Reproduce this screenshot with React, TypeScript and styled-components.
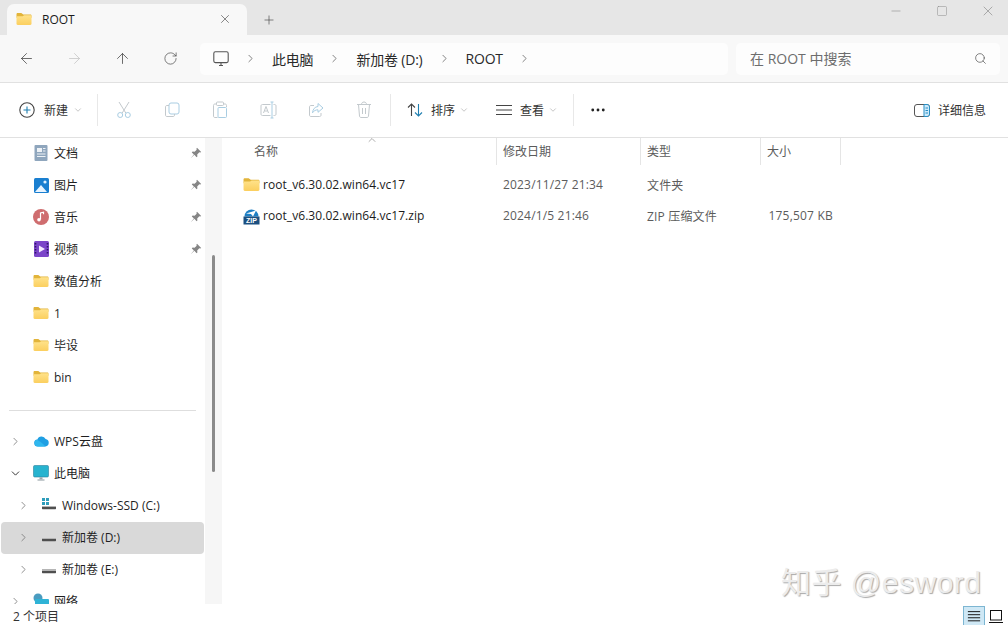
import React, { useId } from "react";
import styled, { createGlobalStyle } from "styled-components";
import {
  ArrowLeft,
  ArrowRight,
  ArrowUp,
  ChevronDown,
  ChevronRight,
  ChevronUp,
  Ellipsis,
  Minus,
  Plus,
  RotateCw,
  Search,
  Square,
  X,
} from "lucide-react";

const GlobalStyle = createGlobalStyle`
  html, body {
    margin: 0;
    padding: 0;
    background: #ffffff;
  }
  body {
    font-family: "Open Sans", "Noto Sans CJK SC", sans-serif;
    font-size: 12px;
    color: #1b1b1b;
    -webkit-font-smoothing: antialiased;
  }
`;

const Window = styled.div`
  position: relative;
  width: 1008px;
  height: 625px;
  display: flex;
  flex-direction: column;
  overflow: hidden;
`;

/* title bar */
const TitleBar = styled.div`
  height: 35px;
  flex: none;
  background: #e6e6e6;
  display: flex;
  align-items: flex-end;
  padding-left: 7px;
`;

const Tab = styled.div`
  width: 240px;
  height: 31px;
  box-sizing: border-box;
  background: #f8f8f8;
  border-radius: 7px 7px 0 0;
  display: flex;
  align-items: center;
  padding: 0 15px 1px 9px;
  gap: 10px;
`;

const TabTitle = styled.span`
  flex: 1;
  font-size: 12px;
`;

const NewTab = styled.div`
  margin-left: 15px;
  height: 31px;
  display: flex;
  align-items: center;
  color: #444;
`;

const WindowControls = styled.div`
  margin-left: auto;
  margin-right: -3px;
  align-self: flex-start;
  display: flex;
  color: #8a8a8a;
`;

const WindowControl = styled.div`
  width: 46px;
  height: 21px;
  display: flex;
  align-items: center;
  justify-content: center;
`;

/* nav bar */
const NavBar = styled.div`
  height: 48px;
  flex: none;
  box-sizing: border-box;
  background: #f8f8f8;
  border-bottom: 1px solid #e1e1e1;
  display: flex;
  align-items: center;
  padding: 0 8px 0 2px;
`;

const NavButton = styled.div<{ $disabled?: boolean }>`
  width: 48px;
  height: 32px;
  display: flex;
  align-items: center;
  justify-content: center;
  color: ${(p) => (p.$disabled ? "#c4c4c4" : "#444")};
`;

const AddressBox = styled.div`
  width: 528px;
  height: 32px;
  margin-left: 6px;
  background: #fdfdfd;
  border-radius: 5px;
  display: flex;
  align-items: center;
  padding-left: 13px;
  box-sizing: border-box;
  font-size: 14px;
  color: #2a2a2a;
`;

const Crumb = styled.span`
  white-space: nowrap;
  letter-spacing: -0.2px;
`;

const CrumbArrow = styled.span`
  width: 21px;
  margin: 0 11px 0 11px;
  display: flex;
  justify-content: center;
  color: #444;
`;

const SearchBox = styled.div`
  width: 264px;
  height: 32px;
  margin-left: 8px;
  box-sizing: border-box;
  background: #fdfdfd;
  border-radius: 5px;
  display: flex;
  align-items: center;
  justify-content: space-between;
  padding: 0 13px 1px 14px;
  font-size: 14px;
  color: #6d6d6d;
`;

/* command bar */
const CommandBar = styled.div`
  height: 55px;
  flex: none;
  box-sizing: border-box;
  background: #fff;
  border-bottom: 1px solid #e1e1e1;
  display: flex;
  align-items: center;
  padding-left: 19px;
`;

const CommandButton = styled.div<{ $gap?: number; $left?: number }>`
  display: flex;
  align-items: center;
  gap: ${(p) => p.$gap ?? 8}px;
  margin-left: ${(p) => p.$left ?? 0}px;
  color: #333;
  white-space: nowrap;
`;

const IconCommand = styled.div`
  width: 48px;
  display: flex;
  justify-content: center;
`;

const CommandDivider = styled.div<{ $left: number; $right: number }>`
  width: 1px;
  height: 32px;
  background: #e8e8e8;
  margin: 0 ${(p) => p.$right}px 0 ${(p) => p.$left}px;
`;

const Caret = styled.span`
  display: flex;
  color: #8d8d8d;
  margin-left: -4px;
`;

const DetailsButton = styled(CommandButton)`
  margin-left: auto;
  margin-right: 22px;
`;

/* main area */
const Main = styled.div`
  flex: 1;
  min-height: 0;
  display: flex;
  overflow: hidden;
`;

const Sidebar = styled.div`
  width: 205px;
  flex: none;
  overflow: hidden;
`;

const NavRow = styled.div<{ $level?: number; $selected?: boolean }>`
  height: 32px;
  box-sizing: border-box;
  margin-left: 1px;
  margin-right: 1px;
  border-radius: 4px;
  background: ${(p) => (p.$selected ? "#d9d9d9" : "transparent")};
  display: flex;
  align-items: center;
  padding: 0 3px 2px ${(p) => (p.$level ? 15 : 7)}px;
  color: #1f1f1f;
`;

const Expander = styled.span`
  width: 14px;
  display: flex;
  justify-content: center;
  color: #777;
  margin-right: 11px;
`;

const NavIconSlot = styled.span`
  width: 16px;
  height: 16px;
  display: flex;
  align-items: center;
  justify-content: center;
  margin-right: 5px;
`;

const NavLabel = styled.span`
  flex: 1;
  white-space: nowrap;
`;

const Pin = styled.span`
  display: flex;
  margin-right: -1px;
`;

const NavDivider = styled.div`
  height: 1px;
  background: #dedede;
  margin: 16px 9px 15px;
  width: 187px;
`;

const ScrollTrack = styled.div`
  width: 17px;
  flex: none;
  background: #f6f6f6;
  padding-top: 117px;
  display: flex;
  justify-content: center;
  box-sizing: border-box;
`;

const ScrollThumb = styled.div`
  width: 3px;
  height: 217px;
  border-radius: 2px;
  background: #8a8a8a;
`;

const Content = styled.div`
  flex: 1;
  min-width: 0;
`;

const Columns = "275px 144px 120px 80px";

const HeaderRow = styled.div`
  display: grid;
  grid-template-columns: ${Columns};
  height: 27px;
  position: relative;
`;

const HeaderCell = styled.div<{ $pad: number }>`
  display: flex;
  align-items: center;
  padding: 0 0 1px ${(p) => p.$pad}px;
  border-right: 1px solid #e5e5e5;
  color: #5b5b5b;
`;

const SortArrow = styled.span`
  position: absolute;
  left: 144px;
  top: -4px;
  color: #777;
  display: flex;
`;

const FileList = styled.div`
  padding-top: 4px;
`;

const FileRow = styled.div`
  display: grid;
  grid-template-columns: ${Columns};
  height: 31px;
  align-items: center;
  color: #5c5c5c;
`;

const NameCell = styled.div`
  display: flex;
  align-items: center;
  gap: 3px;
  padding-left: 21px;
  color: #1b1b1b;
  letter-spacing: 0.06px;
  white-space: nowrap;
`;

const DataCell = styled.div`
  padding-left: 6px;
  letter-spacing: 0.17px;
  white-space: nowrap;
`;

const SizeCell = styled.div`
  padding-right: 8px;
  text-align: right;
  letter-spacing: 0.2px;
  white-space: nowrap;
`;

/* status bar */
const StatusBar = styled.div`
  height: 21px;
  flex: none;
  display: flex;
  align-items: center;
  justify-content: space-between;
  padding: 2px 4px 0 13px;
  box-sizing: border-box;
  color: #333;
`;

const ViewToggles = styled.div`
  display: flex;
  gap: 3px;
  align-self: flex-end;
`;

const ViewToggle = styled.div<{ $active?: boolean }>`
  width: ${(p) => (p.$active ? 22 : 16)}px;
  height: 19px;
  box-sizing: border-box;
  display: flex;
  align-items: center;
  justify-content: center;
  color: #111;
  background: ${(p) => (p.$active ? "#cfe8f5" : "transparent")};
  border: 1px solid ${(p) => (p.$active ? "#7db6d2" : "transparent")};
  border-bottom: none;
`;

const Watermark = styled.div`
  position: absolute;
  left: 781px;
  top: 563px;
  font-family: "Liberation Sans", "Noto Sans CJK SC", sans-serif;
  font-size: 30px;
  line-height: 40px;
  letter-spacing: 0.5px;
  white-space: nowrap;
  color: #ececec;
  text-shadow: 1px 1px 1px #a9a9a9;
`;

const Folder = ({ size = 16 }: { size?: number }) => {
  const id = useId();
  return (
    <svg width={size} height={size} viewBox="0 0 16 16">
      <defs>
        <linearGradient id={id} x1="0" y1="0" x2="0" y2="1">
          <stop offset="0" stopColor="#ffe28a" />
          <stop offset="1" stopColor="#fbcf5f" />
        </linearGradient>
      </defs>
      <path d="M0.5 3.2c0-.7.5-1.2 1.2-1.2h3.6l2 1.6h7c.7 0 1.2.5 1.2 1.2v2H.5z" fill="#e2b43a" />
      <path d="M.5 5.2h6.2l1.5-1h6.1c.7 0 1.2.5 1.2 1.2v7.4c0 .7-.5 1.2-1.2 1.2H1.7c-.7 0-1.2-.5-1.2-1.2z" fill={`url(#${id})`} />
    </svg>
  );
};

const DocIcon = () => (
  <svg width="14" height="16" viewBox="0 0 14 16">
    <rect x="0.5" y="0" width="13" height="16" rx="1" fill="#8fa6bd" />
    <rect x="3" y="3" width="5" height="4" fill="#eef2f6" />
    <path d="M9 3.5h2.5M9 6h2.5M3 9h8.5M3 11.5h8.5" stroke="#eef2f6" strokeWidth="1" />
  </svg>
);

const PictureIcon = () => (
  <svg width="15" height="15" viewBox="0 0 15 15">
    <rect width="15" height="15" rx="1.5" fill="#1a7fd0" />
    <circle cx="11" cy="4" r="1.6" fill="#dff1ff" />
    <path d="M1 14l6-7 6 7z" fill="#e8f4ff" />
  </svg>
);

const MusicIcon = () => (
  <svg width="16" height="16" viewBox="0 0 16 16">
    <circle cx="8" cy="8" r="8" fill="#cf6d6f" />
    <path d="M7.5 10.5V4l3 -.8v2" stroke="#fff" strokeWidth="1.2" fill="none" />
    <circle cx="6" cy="10.8" r="1.8" fill="#fff" />
  </svg>
);

const VideoIcon = () => (
  <svg width="15" height="16" viewBox="0 0 15 16">
    <rect width="15" height="16" rx="1.5" fill="#7b45c9" />
    <path d="M5 4.5l6 3.5-6 3.5z" fill="#f3e9ff" />
    <path d="M1.5 2v12M13.5 2v12" stroke="#2f1566" strokeWidth="1.6" strokeDasharray="1.5 1.5" />
  </svg>
);

const CloudIcon = () => (
  <svg width="15" height="12" viewBox="0 0 15 12">
    <path d="M4 11.5a3.5 3.5 0 0 1-.6-7A4.4 4.4 0 0 1 11.6 4 3.8 3.8 0 0 1 11.5 11.5z" fill="#1f9fe3" />
    <path d="M4 11.5a3.5 3.5 0 0 1-1-6.8c2 1 5 3 8.5 6.8z" fill="#2fb7ee" />
  </svg>
);

const PcIcon = () => (
  <svg width="16" height="16" viewBox="0 0 16 16">
    <rect x="0.5" y="0.5" width="15" height="11.5" rx="1.2" fill="#27b3cf" stroke="#2a7f9c" strokeWidth="0.6" />
    <path d="M6.5 12.3h3v2h-3z" fill="#9aa7ad" />
    <path d="M4.5 15h7" stroke="#8a979e" strokeWidth="1" />
  </svg>
);

const DriveIcon = ({ windows, light }: { windows?: boolean; light?: boolean }) => (
  <svg width="16" height="16" viewBox="0 0 16 16" style={{ overflow: "visible" }}>
    {windows && <path d="M1 1h3v3H1zM5 1h3v3H5zM1 5h3v3H1zM5 5h3v3H5z" fill="#2e9dbb" />}
    <rect x="1" y="9" width="14" height="3.2" rx="0.6" fill="#4f4f4f" />
    <rect x="1" y={light ? 8 : 9} width="14" height={light ? 2 : 1} fill="#b5b5b5" />
  </svg>
);

const NetworkIcon = () => (
  <svg width="16" height="16" viewBox="0 0 16 16">
    <circle cx="5" cy="5" r="4.5" fill="#4a9cc0" />
    <rect x="2" y="6" width="14" height="8" rx="1" fill="#2fb3d6" />
    <path d="M4 14.5h10" stroke="#6c7c84" strokeWidth="1" />
  </svg>
);

const PinIcon = () => (
  <svg width="12" height="12" viewBox="0 0 12 12">
    <path d="M7 .8l4.2 4.2-1 .6-.9-.3L7.2 7.4l.2 2-.8.8-2.2-2.4L1 11 .9 11l3-3.4L1.8 5.4l.8-.8 2 .2 2.1-2.1-.3-.9z" fill="#858585" />
  </svg>
);

const ZipIcon = () => (
  <svg width="17" height="18" viewBox="0 0 17 18">
    <path d="M1.5 9.5a7 7 0 0 1 14 0z" fill="#1e7fc4" />
    <path d="M3 6.5l10-3-3 6-2-2.5z" fill="#fff" />
    <rect x="0.5" y="9.5" width="16" height="8" fill="#1b4f80" />
    <text x="8.5" y="16" fontSize="7" fontWeight="700" textAnchor="middle" fill="#fff" fontFamily="Liberation Sans, sans-serif">
      ZIP
    </text>
  </svg>
);

const MonitorIcon = () => (
  <svg width="16" height="16" viewBox="0 0 16 16" fill="none" stroke="#555" strokeWidth="1.1">
    <rect x="0.8" y="0.8" width="14.4" height="10.8" rx="1.6" />
    <path d="M6 14.5h4M8 12v2.5" />
  </svg>
);

const GREY = "#c3c9cd";
const TINT = "#a9cde2";

const CutIcon = () => (
  <svg width="16" height="18" viewBox="0 0 16 18" fill="none">
    <path d="M3 1l6.8 11M13 1L6.2 12" stroke={GREY} />
    <circle cx="4.2" cy="14" r="2.5" stroke={TINT} />
    <circle cx="11.8" cy="14" r="2.5" stroke={TINT} />
  </svg>
);

const CopyIcon = () => (
  <svg width="16" height="16" viewBox="0 0 16 16" fill="none">
    <rect x="5" y="1" width="10" height="11" rx="2" stroke={TINT} />
    <path d="M5 3.5H3C2 3.5 1.5 4 1.5 5v8c0 1 .5 1.5 1.5 1.5h6c1 0 1.5-.5 1.5-1.5v-1" stroke={GREY} />
  </svg>
);

const PasteIcon = () => (
  <svg width="16" height="18" viewBox="0 0 16 18" fill="none">
    <path d="M4.5 3H3C2 3 1.5 3.5 1.5 4.5V15c0 1 .5 1.5 1.5 1.5h2.5M11.5 3H13c1 0 1.5.5 1.5 1.5V6" stroke={GREY} />
    <rect x="4.5" y="1" width="7" height="3.5" rx="1" stroke={GREY} />
    <rect x="6" y="6.5" width="8.5" height="10" rx="1" stroke={TINT} />
  </svg>
);

const RenameIcon = () => (
  <svg width="17" height="18" viewBox="0 0 17 18" fill="none">
    <path d="M10.5 3.5H2.5c-1 0-1.5.5-1.5 1.5v8c0 1 .5 1.500 1.500 1.500h8M13.500 3.500h1c1 0 1.500.5 1.500 1.500v8c0 1-.5 1.500-1.500 1.500h-1" stroke={GREY} />
    <path d="M3.500 12l2.500-6.500L8.500 12M4.500 10h3" stroke={GREY} />
    <path d="M12 1v16M10.500 1h3M10.500 17h3" stroke={TINT} />
  </svg>
);

const ShareIcon = () => (
  <svg width="16" height="16" viewBox="0 0 16 16" fill="none">
    <path d="M6 3.500H3C2 3.500 1.500 4 1.500 5v8c0 1 .5 1.500 1.500 1.500h8.500c1 0 1.500-.5 1.500-1.500v-2" stroke={GREY} />
    <path d="M10 1.500l5 4.500-5 4.300V7.800c-2.500 0-4.200 1-5.500 3 .3-3.500 2.300-6 5.500-6.300z" stroke={TINT} />
  </svg>
);

const TrashIcon = () => (
  <svg width="16" height="18" viewBox="0 0 16 18" fill="none" stroke={GREY}>
    <path d="M1 3.500h14M5.500 3.500c0-1.500 1-2.500 2.500-2.500s2.500 1 2.500 2.500" />
    <path d="M2.500 3.500l1 11.500c.1 1 .7 1.500 1.500 1.500h6c.8 0 1.400-.5 1.500-1.500l1-11.500" />
    <path d="M6.500 7v6M9.500 7v6" />
  </svg>
);

const DetailsIcon = () => (
  <svg width="16" height="13" viewBox="0 0 16 13" fill="none">
    <rect x="0.5" y="0.5" width="15" height="12" rx="2.5" stroke="#555" />
    <path d="M10 .5h3c1.400 0 2.500 1.100 2.500 2.500v7c0 1.400-1.100 2.500-2.500 2.500h-3z" fill="#cdeafb" stroke="#2a8fc4" />
    <path d="M11.500 4h2.500M11.500 6.500h2.500M11.500 9h2.500" stroke="#2a8fc4" />
  </svg>
);

const NewIcon = () => (
  <svg width="16" height="16" viewBox="0 0 16 16" fill="none">
    <circle cx="8" cy="8" r="7.2" stroke="#444" strokeWidth="1.1" />
    <path d="M8 4.500v7M4.500 8h7" stroke="#1f7fb0" strokeWidth="1.1" />
  </svg>
);

const SortIcon = () => (
  <svg width="16" height="14" viewBox="0 0 16 14" fill="none" strokeWidth="1.1">
    <path d="M4.500 13V1M1 4.500L4.500 1 8 4.500" stroke="#444" />
    <path d="M11.500 1v12M8 9.500l3.500 3.500 3.500-3.500" stroke="#1f7fb0" />
  </svg>
);

const LinesIcon = ({ size = 16 }: { size?: number }) => (
  <svg width={size} height={size} viewBox="0 0 16 16" stroke="currentColor" strokeWidth="1.1">
    <path d="M1 3h14M1 6.500h14M1 10h14M1 13.500h14" />
  </svg>
);

const ViewIcon = () => (
  <svg width="16" height="12" viewBox="0 0 16 12" stroke="#444" strokeWidth="1.1">
    <path d="M0 1.500h16M0 6h16M0 10.500h16" />
  </svg>
);

const TileIcon = () => (
  <svg width="14" height="13" viewBox="0 0 14 13" fill="none" stroke="#111">
    <rect x="1.5" y="0.5" width="11" height="9.5" />
    <path d="M0 12.500h14" />
  </svg>
);

const ThinCaret = () => (
  <Caret>
    <ChevronDown size={10} strokeWidth={1.2} />
  </Caret>
);

const Arrow = () => (
  <CrumbArrow>
    <ChevronRight size={13} strokeWidth={1.2} />
  </CrumbArrow>
);

interface INavItem {
  label: string;
  icon: React.ReactNode;
  pinned?: boolean;
}

const quickItems: INavItem[] = [
  { label: "文档", icon: <DocIcon />, pinned: true },
  { label: "图片", icon: <PictureIcon />, pinned: true },
  { label: "音乐", icon: <MusicIcon />, pinned: true },
  { label: "视频", icon: <VideoIcon />, pinned: true },
  { label: "数值分析", icon: <Folder /> },
  { label: "1", icon: <Folder /> },
  { label: "毕设", icon: <Folder /> },
  { label: "bin", icon: <Folder /> },
];

const App = () => {
  return (
    <Window>
      <GlobalStyle />
      <TitleBar>
        <Tab>
          <Folder />
          <TabTitle>ROOT</TabTitle>
          <X size={14} strokeWidth={1} color="#333" />
        </Tab>
        <NewTab>
          <Plus size={14} strokeWidth={1.1} />
        </NewTab>
        <WindowControls>
          <WindowControl>
            <Minus size={14} strokeWidth={1} />
          </WindowControl>
          <WindowControl>
            <Square size={12} strokeWidth={1} />
          </WindowControl>
          <WindowControl>
            <X size={16} strokeWidth={1} />
          </WindowControl>
        </WindowControls>
      </TitleBar>

      <NavBar>
        <NavButton>
          <ArrowLeft size={17} strokeWidth={1.1} />
        </NavButton>
        <NavButton $disabled>
          <ArrowRight size={17} strokeWidth={1.1} />
        </NavButton>
        <NavButton>
          <ArrowUp size={17} strokeWidth={1.1} />
        </NavButton>
        <NavButton>
          <RotateCw size={15} strokeWidth={1.1} />
        </NavButton>
        <AddressBox>
          <MonitorIcon />
          <Arrow />
          <Crumb>此电脑</Crumb>
          <Arrow />
          <Crumb>新加卷 (D:)</Crumb>
          <Arrow />
          <Crumb>ROOT</Crumb>
          <Arrow />
        </AddressBox>
        <SearchBox>
          <span>在 ROOT 中搜索</span>
          <Search size={13} strokeWidth={1.2} color="#444" />
        </SearchBox>
      </NavBar>

      <CommandBar>
        <CommandButton $gap={9}>
          <NewIcon />
          <span>新建</span>
          <ThinCaret />
        </CommandButton>
        <CommandDivider $left={14} $right={2} />
        <IconCommand>
          <CutIcon />
        </IconCommand>
        <IconCommand>
          <CopyIcon />
        </IconCommand>
        <IconCommand>
          <PasteIcon />
        </IconCommand>
        <IconCommand>
          <RenameIcon />
        </IconCommand>
        <IconCommand>
          <ShareIcon />
        </IconCommand>
        <IconCommand>
          <TrashIcon />
        </IconCommand>
        <CommandDivider $left={2} $right={16} />
        <CommandButton>
          <SortIcon />
          <span>排序</span>
          <ThinCaret />
        </CommandButton>
        <CommandButton $left={27}>
          <ViewIcon />
          <span>查看</span>
          <ThinCaret />
        </CommandButton>
        <CommandDivider $left={15} $right={15} />
        <CommandButton>
          <Ellipsis size={18} strokeWidth={1.8} color="#222" />
        </CommandButton>
        <DetailsButton>
          <DetailsIcon />
          <span>详细信息</span>
        </DetailsButton>
      </CommandBar>

      <Main>
        <Sidebar>
          {quickItems.map((item, index) => (
            <NavRow key={index}>
              <Expander />
              <NavIconSlot>{item.icon}</NavIconSlot>
              <NavLabel>{item.label}</NavLabel>
              {item.pinned && (
                <Pin>
                  <PinIcon />
                </Pin>
              )}
            </NavRow>
          ))}
          <NavDivider />
          <NavRow>
            <Expander>
              <ChevronRight size={13} strokeWidth={1.5} />
            </Expander>
            <NavIconSlot>
              <CloudIcon />
            </NavIconSlot>
            <NavLabel>WPS云盘</NavLabel>
          </NavRow>
          <NavRow>
            <Expander>
              <ChevronDown size={13} strokeWidth={1.8} color="#333" />
            </Expander>
            <NavIconSlot>
              <PcIcon />
            </NavIconSlot>
            <NavLabel>此电脑</NavLabel>
          </NavRow>
          <NavRow $level={1}>
            <Expander>
              <ChevronRight size={13} strokeWidth={1.5} />
            </Expander>
            <NavIconSlot>
              <DriveIcon windows />
            </NavIconSlot>
            <NavLabel>Windows-SSD (C:)</NavLabel>
          </NavRow>
          <NavRow $level={1} $selected>
            <Expander>
              <ChevronRight size={13} strokeWidth={1.5} />
            </Expander>
            <NavIconSlot>
              <DriveIcon />
            </NavIconSlot>
            <NavLabel>新加卷 (D:)</NavLabel>
          </NavRow>
          <NavRow $level={1}>
            <Expander>
              <ChevronRight size={13} strokeWidth={1.5} />
            </Expander>
            <NavIconSlot>
              <DriveIcon light />
            </NavIconSlot>
            <NavLabel>新加卷 (E:)</NavLabel>
          </NavRow>
          <NavRow>
            <Expander>
              <ChevronRight size={13} strokeWidth={1.5} />
            </Expander>
            <NavIconSlot>
              <NetworkIcon />
            </NavIconSlot>
            <NavLabel>网络</NavLabel>
          </NavRow>
        </Sidebar>
        <ScrollTrack>
          <ScrollThumb />
        </ScrollTrack>
        <Content>
          <HeaderRow>
            <SortArrow>
              <ChevronUp size={12} strokeWidth={1.2} />
            </SortArrow>
            <HeaderCell $pad={32}>名称</HeaderCell>
            <HeaderCell $pad={6}>修改日期</HeaderCell>
            <HeaderCell $pad={6}>类型</HeaderCell>
            <HeaderCell $pad={6}>大小</HeaderCell>
          </HeaderRow>
          <FileList>
            <FileRow>
              <NameCell>
                <Folder size={17} />
                root_v6.30.02.win64.vc17
              </NameCell>
              <DataCell>2023/11/27 21:34</DataCell>
              <DataCell>文件夹</DataCell>
              <SizeCell />
            </FileRow>
            <FileRow>
              <NameCell>
                <ZipIcon />
                root_v6.30.02.win64.vc17.zip
              </NameCell>
              <DataCell>2024/1/5 21:46</DataCell>
              <DataCell>ZIP 压缩文件</DataCell>
              <SizeCell>175,507 KB</SizeCell>
            </FileRow>
          </FileList>
        </Content>
      </Main>

      <StatusBar>
        <span>2 个项目</span>
        <ViewToggles>
          <ViewToggle $active>
            <LinesIcon size={14} />
          </ViewToggle>
          <ViewToggle>
            <TileIcon />
          </ViewToggle>
        </ViewToggles>
      </StatusBar>

      <Watermark>知乎 @esword</Watermark>
    </Window>
  );
};

export default App;
